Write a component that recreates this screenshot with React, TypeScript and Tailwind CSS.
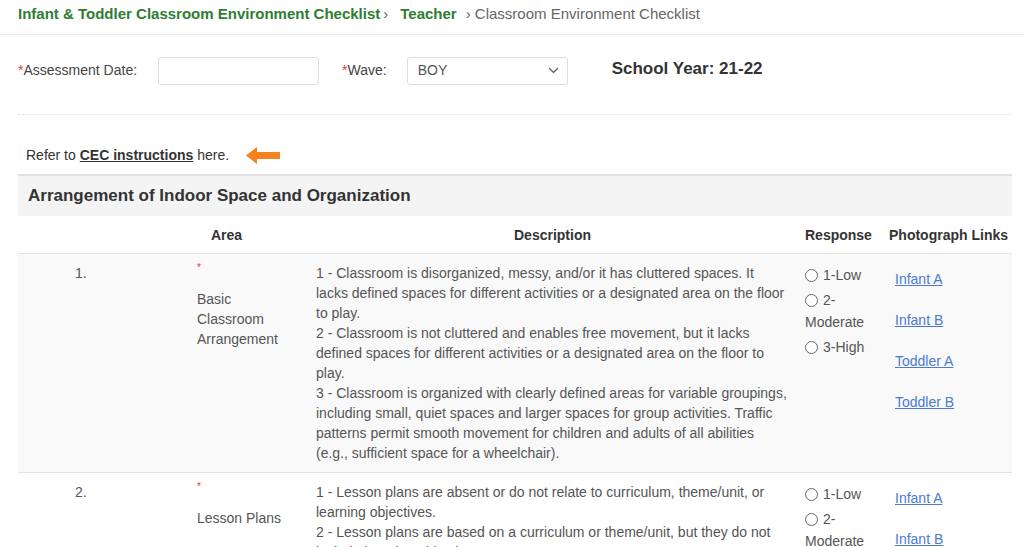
import React from 'react';

const font = { fontFamily: '"Liberation Sans", Arial, sans-serif' };

interface Row {
  num: string;
  area: string[];
  desc: string;
}

const rows: Row[] = [
  {
    num: '1.',
    area: ['Basic', 'Classroom', 'Arrangement'],
    desc:
      '1 - Classroom is disorganized, messy, and/or it has cluttered spaces. It lacks defined spaces for different activities or a designated area on the floor to play.\n2 - Classroom is not cluttered and enables free movement, but it lacks defined spaces for different activities or a designated area on the floor to play.\n3 - Classroom is organized with clearly defined areas for variable groupings, including small, quiet spaces and larger spaces for group activities. Traffic patterns permit smooth movement for children and adults of all abilities (e.g., sufficient space for a wheelchair).',
  },
  {
    num: '2.',
    area: ['Lesson Plans'],
    desc:
      '1 - Lesson plans are absent or do not relate to curriculum, theme/unit, or learning objectives.\n2 - Lesson plans are based on a curriculum or theme/unit, but they do not include learning objectives.\n3 - Lesson plans are based on a curriculum and theme/unit and include learning objectives.',
  },
];

function Radio({ label }: { label: React.ReactNode }) {
  return (
    <div className="flex items-start gap-[5px]">
      <span className="mt-[5px] inline-block h-[13px] w-[13px] shrink-0 rounded-full border border-[#666] bg-white" />
      <span>{label}</span>
    </div>
  );
}

function ChecklistRow({ row, shaded }: { row: Row; shaded: boolean }) {
  return (
    <div className={`flex border-b border-[#e3e3e3] text-[14px] leading-[20px] text-[#555] ${shaded ? 'bg-[#f9f9f9]' : 'bg-white'}`}>
      <div className="w-[172px] shrink-0 pl-[57px] pt-[9px]">{row.num}</div>
      <div className="w-[118px] shrink-0 pl-[7px] pt-[9px]">
        <div className="text-[10px] leading-[10px] text-[#e53935]">*</div>
        <div className="mt-[16px]">
          {row.area.map((a) => (
            <div key={a}>{a}</div>
          ))}
        </div>
      </div>
      <div className="w-[487px] shrink-0 whitespace-pre-line pl-2 pr-[6px] pt-[9px] pb-[9px]">{row.desc}</div>
      <div className="w-[89px] shrink-0 pl-[10px] pt-[10px] leading-[22px]">
        <div className="flex flex-col gap-[3px]">
          <Radio label="1-Low" />
          <Radio label={<>2-<br /><span className="-ml-[18px]">Moderate</span></>} />
          <Radio label="3-High" />
        </div>
      </div>
      <div className="flex-1 pl-[11px] pt-[15px]">
        <div className="flex flex-col gap-[21px]">
          {['Infant A', 'Infant B', 'Toddler A', 'Toddler B'].map((l) => (
            <a key={l} href="#" className="text-[#4a7bd0] underline">
              {l}
            </a>
          ))}
        </div>
      </div>
    </div>
  );
}

export default function App() {
  return (
    <div className="h-[547px] w-[1024px] overflow-hidden bg-white" style={font}>
      {/* Breadcrumb */}
      <div className="flex h-[35px] items-start border-b border-[#ececec] pl-[18px] pt-[5px] text-[15px] leading-[18px]">
        <span className="font-bold text-[#2e7d32]">Infant &amp; Toddler Classroom Environment Checklist</span>
        <span className="ml-[3px] text-[#666]">›</span>
        <span className="ml-[12px] font-bold text-[#2e7d32]">Teacher</span>
        <span className="ml-[9px] text-[#666]">› Classroom Environment Checklist</span>
      </div>

      <div className="ml-[18px] mr-[12px]">
        {/* Form row */}
        <div className="flex h-[80px] items-center border-b border-dotted border-[#ddd] pb-[8px] text-[14px] text-[#444]">
          <span>
            <span className="text-[#e53935]">*</span>Assessment Date:
          </span>
          <input className="ml-[21px] h-[28px] w-[161px] rounded-[3px] border border-[#ddd]" />
          <span className="ml-[23px]">
            <span className="text-[#e53935]">*</span>Wave:
          </span>
          <div className="ml-[20px] flex h-[28px] w-[161px] items-center justify-between rounded-[3px] border border-[#ddd] pl-[10px] pr-[8px] text-[#555]">
            <span>BOY</span>
            <svg width="11" height="7" viewBox="0 0 11 7" fill="none" stroke="#666" strokeWidth="1.3">
              <path d="M1 1l4.5 4.5L10 1" />
            </svg>
          </div>
          <span className="ml-[44px] -mt-[3px] text-[17px] font-bold text-[#333]">School Year: 21-22</span>
        </div>

        {/* Instructions */}
        <div className="flex h-[59px] items-center pl-[8px] pt-[21px] text-[14px] text-[#333]">
          <span>
            Refer to{' '}
            <a href="#" className="font-bold text-[#333] underline">
              CEC instructions
            </a>{' '}
            here.
          </span>
          <svg className="ml-[17px]" width="34" height="17" viewBox="0 0 34 17">
            <path d="M0 8.5L11 0v5h23v7H11v5z" fill="#f5821f" />
          </svg>
        </div>

        {/* Section header */}
        <div className="flex h-[42px] items-center border-t-2 border-[#e0e0e0] bg-[#f4f4f4] pl-[10px] text-[17px] font-bold text-[#333]">
          Arrangement of Indoor Space and Organization
        </div>

        {/* Column headers */}
        <div className="flex h-[38px] items-center border-b border-[#e3e3e3] pt-[2px] text-[14px] font-bold text-[#333]">
          <div className="w-[172px] shrink-0" />
          <div className="w-[118px] shrink-0 pl-[21px]">Area</div>
          <div className="w-[487px] shrink-0 pl-2 pr-[6px] text-center">Description</div>
          <div className="w-[89px] shrink-0 pl-[10px]">Response</div>
          <div className="flex-1 whitespace-nowrap pl-[5px]">Photograph Links</div>
        </div>

        {rows.map((r, i) => (
          <ChecklistRow key={r.num} row={r} shaded={i === 0} />
        ))}
      </div>
    </div>
  );
}
